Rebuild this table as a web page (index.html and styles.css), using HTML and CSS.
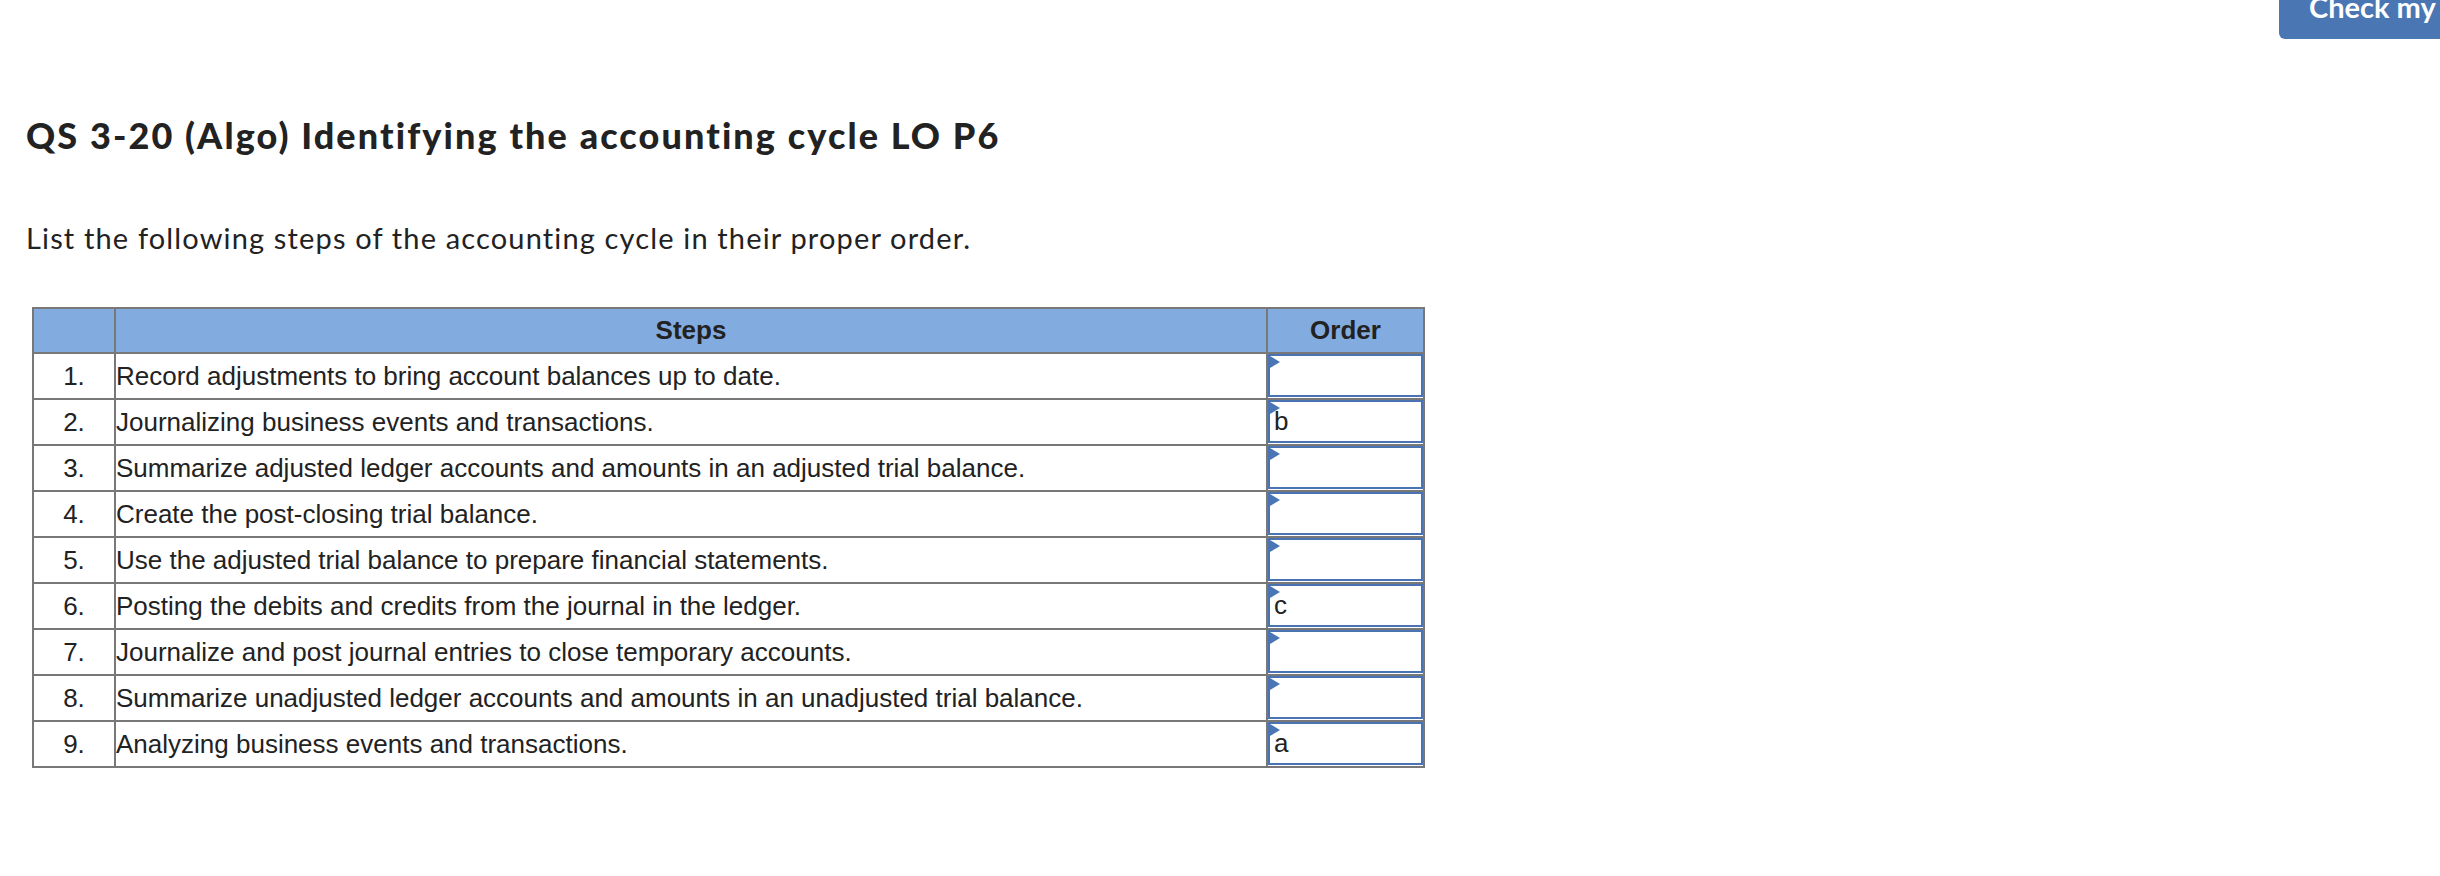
FILE: index.html
```html
<!DOCTYPE html>
<html lang="en">
<head>
<meta charset="utf-8">
<title>QS 3-20 (Algo) Identifying the accounting cycle LO P6</title>
<link rel="stylesheet" href="styles.css">
</head>
<body>
<div class="topbar">
  <div class="check" role="button"><span class="check-label">Check my</span></div>
</div>
<main class="content">
  <h1 class="title">QS 3-20 (Algo) Identifying the accounting cycle LO P6</h1>
  <p class="prompt">List the following steps of the accounting cycle in their proper order.</p>
  <table class="steps">
    <thead>
      <tr>
        <th class="c-num"></th>
        <th class="c-step">Steps</th>
        <th class="c-order">Order</th>
      </tr>
    </thead>
    <tbody>
      <tr><td class="num">1.</td><td class="step">Record adjustments to bring account balances up to date.</td><td class="order"><div class="answer"><span class="flag"></span></div></td></tr>
      <tr><td class="num">2.</td><td class="step">Journalizing business events and transactions.</td><td class="order"><div class="answer"><span class="flag"></span>b</div></td></tr>
      <tr><td class="num">3.</td><td class="step">Summarize adjusted ledger accounts and amounts in an adjusted trial balance.</td><td class="order"><div class="answer"><span class="flag"></span></div></td></tr>
      <tr><td class="num">4.</td><td class="step">Create the post-closing trial balance.</td><td class="order"><div class="answer"><span class="flag"></span></div></td></tr>
      <tr><td class="num">5.</td><td class="step">Use the adjusted trial balance to prepare financial statements.</td><td class="order"><div class="answer"><span class="flag"></span></div></td></tr>
      <tr><td class="num">6.</td><td class="step">Posting the debits and credits from the journal in the ledger.</td><td class="order"><div class="answer"><span class="flag"></span>c</div></td></tr>
      <tr><td class="num">7.</td><td class="step">Journalize and post journal entries to close temporary accounts.</td><td class="order"><div class="answer"><span class="flag"></span></div></td></tr>
      <tr><td class="num">8.</td><td class="step">Summarize unadjusted ledger accounts and amounts in an unadjusted trial balance.</td><td class="order"><div class="answer"><span class="flag"></span></div></td></tr>
      <tr><td class="num">9.</td><td class="step">Analyzing business events and transactions.</td><td class="order"><div class="answer"><span class="flag"></span>a</div></td></tr>
    </tbody>
  </table>
</main>
</body>
</html>
```

FILE: styles.css
```css
html {
  overflow: hidden;
}
body {
  margin: 0;
  background: #ffffff;
  color: #222222;
  font-family: Lato, "Open Sans", sans-serif;
}
.topbar {
  display: flex;
  justify-content: flex-end;
  height: 39px;
}
.check {
  width: 161px;
  height: 39px;
  box-sizing: border-box;
  padding-left: 30px;
  background: #4a76b4;
  border-radius: 0 0 0 6px;
  overflow: hidden;
  color: #ffffff;
  font-family: Lato, sans-serif;
  font-weight: 700;
  font-size: 29px;
  line-height: 29px;
  white-space: nowrap;
}
.check-label {
  display: block;
  margin-top: -8px;
}
.content {
  padding-left: 26px;
}
.title {
  margin: 74px 0 0 0;
  font-family: Lato, sans-serif;
  font-weight: 900;
  font-size: 36px;
  line-height: 44px;
  letter-spacing: 2.1px;
  color: #222222;
}
.prompt {
  margin: 63px 0 0 0;
  font-family: Lato, sans-serif;
  font-weight: 400;
  font-size: 29px;
  line-height: 36px;
  letter-spacing: 1.15px;
  color: #222222;
}
.steps {
  margin: 51px 0 0 6px;
  border-collapse: separate;
  border-spacing: 0;
  table-layout: fixed;
  width: 1393px;
  border-top: 2px solid #787878;
  border-left: 2px solid #787878;
  font-family: "Liberation Sans", Arial, sans-serif;
  font-size: 26px;
  color: #222222;
}
.steps th,
.steps td {
  box-sizing: border-box;
  border-right: 2px solid #787878;
  border-bottom: 2px solid #787878;
  padding: 0;
}
.steps th {
  background: #82abdf;
  font-weight: 700;
  line-height: 43px;
  text-align: center;
}
.c-num { width: 82px; }
.c-step { width: 1152px; }
.c-order { width: 157px; }
.steps td {
  line-height: 44px;
  vertical-align: top;
}
.num {
  text-align: center;
}
.step {
  padding-left: 6px;
  white-space: nowrap;
}
.order {
  padding: 0;
}
.answer {
  position: relative;
  box-sizing: border-box;
  height: 43px;
  margin-bottom: 1px;
  border: 2px solid #4a73b3;
  padding-left: 4px;
  line-height: 39px;
  background: #ffffff;
}
.flag {
  position: absolute;
  left: 0;
  top: 0;
  width: 0;
  height: 0;
  border-top: 6px solid transparent;
  border-bottom: 6px solid transparent;
  border-left: 10px solid #4a76b6;
}
```
